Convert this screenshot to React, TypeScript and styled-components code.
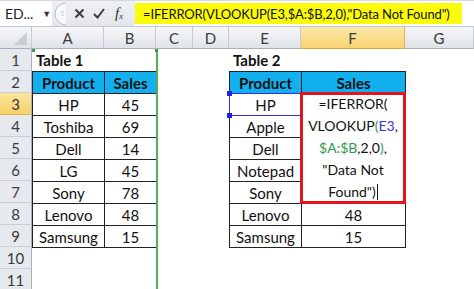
import React from "react";
import styled, { createGlobalStyle } from "styled-components";

const GlobalStyle = createGlobalStyle`
  html, body { margin: 0; padding: 0; background: #fff; }
  body { font-family: Lato, "Liberation Sans", sans-serif; overflow: hidden; }
`;

const Window = styled.div`
  width: 474px;
  height: 289px;
  overflow: hidden;
  background: #fff;
`;

const FormulaBar = styled.div`
  height: 27px;
  box-sizing: border-box;
  display: flex;
  align-items: stretch;
  background: linear-gradient(#eef0f4, #e3e7ec);
  border-top: 1px solid #d3d7de;
  border-bottom: 1px solid #c3c8d0;
`;

const NameBox = styled.div`
  width: 52px;
  background: #fff;
  display: flex;
  align-items: center;
  padding-left: 5px;
  box-sizing: border-box;
  font-size: 14px;
  color: #222;
  gap: 9px;
`;

const Arrow = styled.span`
  font-size: 9px;
  color: #333;
`;

const Tools = styled.div`
  width: 83px;
  display: flex;
  align-items: center;
`;

const ToolIcon = styled.span<{ $w: number }>`
  width: ${(p) => p.$w}px;
  display: flex;
  justify-content: center;
  align-items: center;
  color: #3d3d3d;
`;

const Fx = styled.span`
  font-family: "Liberation Serif", serif;
  font-style: italic;
  font-size: 15px;
  color: #333;
  sub {
    font-size: 9px;
    vertical-align: -1px;
  }
`;

const FormulaField = styled.div`
  flex: 1;
  background: #fff;
  display: flex;
  align-items: center;
`;

const Highlight = styled.div`
  width: 327px;
  height: 21px;
  background: #fbfb0a;
  display: flex;
  align-items: center;
  padding-left: 8px;
  box-sizing: border-box;
  font-size: 13px;
  letter-spacing: -0.15px;
  color: #111;
  white-space: nowrap;
`;

const Sheet = styled.div`
  display: grid;
  grid-template-columns: 32px 72px 52px 37px 36px 72px 104px 69px;
  grid-auto-rows: 22px;
  position: relative;
`;

const ColHead = styled.div<{ $active?: boolean }>`
  display: flex;
  align-items: center;
  justify-content: center;
  font-size: 15px;
  color: #3b3b3b;
  box-sizing: border-box;
  border-right: 1px solid ${(p) => (p.$active ? "#e5b24a" : "#c6cbd3")};
  border-bottom: 1px solid ${(p) => (p.$active ? "#e0a83c" : "#aab1bc")};
  background: ${(p) =>
    p.$active
      ? "linear-gradient(#fde8a8, #f9d273)"
      : "linear-gradient(#f6f7f9, #dfe3e8)"};
`;

const Corner = styled(ColHead)`
  position: relative;
  &::after {
    content: "";
    position: absolute;
    right: 4px;
    bottom: 3px;
    border-style: solid;
    border-width: 0 0 13px 13px;
    border-color: transparent transparent #c9ced5 transparent;
  }
`;

const RowHead = styled.div<{ $row: number; $active?: boolean }>`
  grid-column: 1;
  grid-row: ${(p) => p.$row + 1};
  display: flex;
  align-items: center;
  justify-content: center;
  font-size: 15px;
  color: #3b3b3b;
  box-sizing: border-box;
  border-right: 1px solid #aab1bc;
  border-bottom: 1px solid ${(p) => (p.$active ? "#e5b24a" : "#c9ced6")};
  background: ${(p) =>
    p.$active ? "linear-gradient(#fde49c, #f9d06c)" : "#e6e9ee"};
`;

type Kind = "title" | "head" | "data";

const Cell = styled.div<{ $row: number; $col: number; $kind: Kind }>`
  grid-column: ${(p) => p.$col + 1};
  grid-row: ${(p) => p.$row + 1};
  display: flex;
  align-items: center;
  justify-content: ${(p) => (p.$kind === "title" ? "flex-start" : "center")};
  padding-left: ${(p) => (p.$kind === "title" ? "4px" : "0")};
  font-size: 15px;
  font-weight: ${(p) => (p.$kind === "data" ? 400 : 700)};
  color: #111;
  white-space: nowrap;
  box-sizing: border-box;
  position: relative;
  background: ${(p) => (p.$kind === "head" ? "#12b0ee" : "transparent")};
  border: ${(p) => (p.$kind === "title" ? "none" : "1px solid #222")};
  margin: ${(p) => (p.$kind === "title" ? "0" : "0 -1px -1px 0")};
`;

const RefSelect = styled.div`
  grid-column: 6;
  grid-row: 4;
  border: 1px solid #2f2ff0;
  margin: 0 -1px -1px 0;
  position: relative;
  z-index: 2;
  &::before,
  &::after {
    content: "";
    position: absolute;
    left: -3px;
    width: 5px;
    height: 5px;
    background: #2020e8;
  }
  &::before { top: -3px; }
  &::after { bottom: -3px; }
`;

const RangeMarquee = styled.div`
  grid-column: 2 / 4;
  grid-row: 2 / 13;
  border-right: 2px solid #56ad56;
  margin-right: -2px;
  pointer-events: none;
  position: relative;
  z-index: 2;
  &::before,
  &::after {
    content: "";
    position: absolute;
    top: 0;
    width: 3px;
    height: 3px;
    background: #3f9a3f;
  }
  &::before { left: 0; }
  &::after { right: -2px; }
`;

const EditBox = styled.div`
  grid-column: 7;
  grid-row: 4 / 9;
  background: #fff;
  outline: 3px solid #e4141e;
  outline-offset: -2px;
  z-index: 3;
  text-align: center;
  font-size: 14px;
  line-height: 22px;
  color: #111;
  white-space: nowrap;
`;

const Ref = styled.span<{ $c: string }>`
  color: ${(p) => p.$c};
`;

const Caret = styled.span`
  display: inline-block;
  width: 1px;
  height: 16px;
  background: #111;
  vertical-align: -3px;
  margin-left: 1px;
`;

const BLUE = "#3535e0";
const GREEN = "#2f9a4c";

const letters = ["A", "B", "C", "D", "E", "F", "G"];

const cells: { r: number; c: number; t: string; k: Kind }[] = [
  { r: 1, c: 1, t: "Table 1", k: "title" },
  { r: 1, c: 5, t: "Table 2", k: "title" },
  { r: 2, c: 1, t: "Product", k: "head" },
  { r: 2, c: 2, t: "Sales", k: "head" },
  { r: 2, c: 5, t: "Product", k: "head" },
  { r: 2, c: 6, t: "Sales", k: "head" },
];

const t1: [string, string][] = [
  ["HP", "45"],
  ["Toshiba", "69"],
  ["Dell", "14"],
  ["LG", "45"],
  ["Sony", "78"],
  ["Lenovo", "48"],
  ["Samsung", "15"],
];
t1.forEach(([p, s], i) => {
  cells.push({ r: i + 3, c: 1, t: p, k: "data" });
  cells.push({ r: i + 3, c: 2, t: s, k: "data" });
});

const t2 = ["HP", "Apple", "Dell", "Notepad", "Sony", "Lenovo", "Samsung"];
t2.forEach((p, i) => cells.push({ r: i + 3, c: 5, t: p, k: "data" }));
cells.push({ r: 8, c: 6, t: "48", k: "data" });
cells.push({ r: 9, c: 6, t: "15", k: "data" });

const Grip = () => (
  <svg width="14" height="24" viewBox="0 0 14 24">
    <path d="M13 1 A 11 11 0 0 0 13 23" fill="#f7f8fa" stroke="#b9bec6" />
    <path d="M8 10 h3 M8 13 h3" stroke="#c4c8cf" strokeWidth="1" />
  </svg>
);

const App = () => {
  return (
    <Window>
      <GlobalStyle />
      <FormulaBar>
        <NameBox>
          ED...
          <Arrow>▼</Arrow>
        </NameBox>
        <Tools>
          <ToolIcon $w={16}>
            <Grip />
          </ToolIcon>
          <ToolIcon $w={22}>
            <svg width="11" height="11" viewBox="0 0 11 11">
              <path d="M1.5 1.5 L9.5 9.5 M9.5 1.5 L1.5 9.5" stroke="#3d3d3d" strokeWidth="2" />
            </svg>
          </ToolIcon>
          <ToolIcon $w={18}>
            <svg width="12" height="11" viewBox="0 0 12 11">
              <path d="M1 6 L4.5 9.5 L11 1" stroke="#3d3d3d" strokeWidth="2" fill="none" />
            </svg>
          </ToolIcon>
          <ToolIcon $w={22}>
            <Fx>
              f<sub>x</sub>
            </Fx>
          </ToolIcon>
        </Tools>
        <FormulaField>
          <Highlight>=IFERROR(VLOOKUP(E3,$A:$B,2,0),"Data Not Found")</Highlight>
        </FormulaField>
      </FormulaBar>
      <Sheet>
        <Corner />
        {letters.map((l) => (
          <ColHead key={l} $active={l === "F"}>
            {l}
          </ColHead>
        ))}
        {Array.from({ length: 11 }, (_, i) => (
          <RowHead key={i} $row={i + 1} $active={i + 1 === 3}>
            {i + 1}
          </RowHead>
        ))}
        {cells.map((c) => (
          <Cell key={`${c.r}-${c.c}`} $row={c.r} $col={c.c} $kind={c.k}>
            {c.t}
          </Cell>
        ))}
        <RefSelect />
        <RangeMarquee />
        <EditBox>
          =IFERROR(
          <br />
          VLOOKUP<Ref $c={GREEN}>(</Ref>
          <Ref $c={BLUE}>E3</Ref>,
          <br />
          <Ref $c={GREEN}>$A:$B</Ref>,2,0<Ref $c={GREEN}>)</Ref>,
          <br />
          "Data Not
          <br />
          Found")
          <Caret />
        </EditBox>
      </Sheet>
    </Window>
  );
};

export default App;
